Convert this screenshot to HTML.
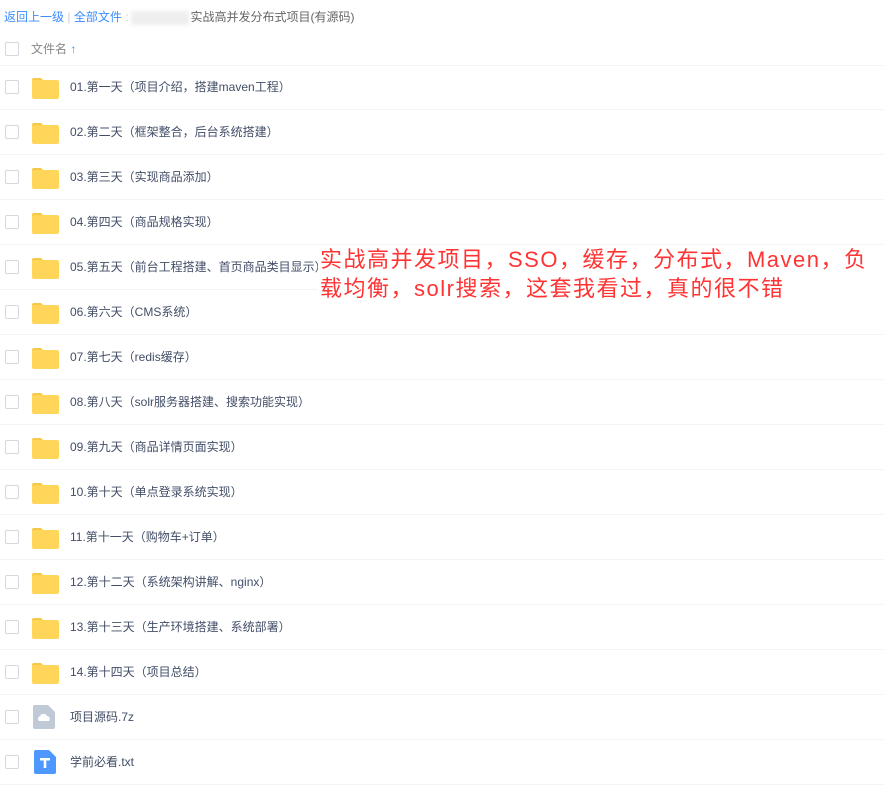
<!DOCTYPE html>
<html><head><meta charset="utf-8"><style>
body{margin:0;width:883px;height:785px;background:#fff;font-family:"Liberation Sans","Noto Sans CJK SC",sans-serif;font-size:12px;color:#424e67;position:relative;overflow:hidden}
.crumb{position:absolute;left:4px;top:8px;color:#666;}
.crumb a{color:#3b8cff}
.blur{display:inline-block;width:58px;height:14px;background:#eee;vertical-align:middle;filter:blur(2px);margin:0 2px}
.hdr{position:absolute;left:0;top:35px;width:883px;height:30px;border-bottom:1px solid #f2f3f5}
.cb{position:absolute;left:5px;width:12px;height:12px;border:1px solid #d4d7de;border-radius:2px;background:#fff}
.row{position:absolute;left:0;width:883px;height:44px;border-bottom:1px solid #f2f3f5}
.row .cb{top:15px}
.row .t{position:absolute;left:70px;top:13px}
.ic{position:absolute;left:32px;top:12px}
.red{position:absolute;left:318px;top:245px;width:565px;background:#fff;color:#f33;font-size:22px;line-height:29px;padding-left:2px;letter-spacing:1.5px}
</style></head><body>
<div class="crumb"><a>返回上一级</a> <span style="color:#ccc">|</span> <a>全部文件</a> <span style="color:#ccc">:</span><span class="blur"></span>实战高并发分布式项目(有源码)</div>
<div class="hdr"><div class="cb" style="top:7px"></div><span style="position:absolute;left:31px;top:5px;color:#888">文件名 <span style="color:#3b8cff;font-weight:bold">↑</span></span></div>
<div class="row" style="top:65px"><div class="cb"></div><svg class="ic" width="27" height="22"><path d="M0 3a2 2 0 0 1 2-2h7l3 3H0z" fill="#f5c945"/><rect x="0" y="3" width="27" height="19" rx="2" fill="#ffd659"/></svg><span class="t">01.第一天（项目介绍，搭建maven工程）</span></div>
<div class="row" style="top:110px"><div class="cb"></div><svg class="ic" width="27" height="22"><path d="M0 3a2 2 0 0 1 2-2h7l3 3H0z" fill="#f5c945"/><rect x="0" y="3" width="27" height="19" rx="2" fill="#ffd659"/></svg><span class="t">02.第二天（框架整合，后台系统搭建）</span></div>
<div class="row" style="top:155px"><div class="cb"></div><svg class="ic" width="27" height="22"><path d="M0 3a2 2 0 0 1 2-2h7l3 3H0z" fill="#f5c945"/><rect x="0" y="3" width="27" height="19" rx="2" fill="#ffd659"/></svg><span class="t">03.第三天（实现商品添加）</span></div>
<div class="row" style="top:200px"><div class="cb"></div><svg class="ic" width="27" height="22"><path d="M0 3a2 2 0 0 1 2-2h7l3 3H0z" fill="#f5c945"/><rect x="0" y="3" width="27" height="19" rx="2" fill="#ffd659"/></svg><span class="t">04.第四天（商品规格实现）</span></div>
<div class="row" style="top:245px"><div class="cb"></div><svg class="ic" width="27" height="22"><path d="M0 3a2 2 0 0 1 2-2h7l3 3H0z" fill="#f5c945"/><rect x="0" y="3" width="27" height="19" rx="2" fill="#ffd659"/></svg><span class="t">05.第五天（前台工程搭建、首页商品类目显示）</span></div>
<div class="row" style="top:290px"><div class="cb"></div><svg class="ic" width="27" height="22"><path d="M0 3a2 2 0 0 1 2-2h7l3 3H0z" fill="#f5c945"/><rect x="0" y="3" width="27" height="19" rx="2" fill="#ffd659"/></svg><span class="t">06.第六天（CMS系统）</span></div>
<div class="row" style="top:335px"><div class="cb"></div><svg class="ic" width="27" height="22"><path d="M0 3a2 2 0 0 1 2-2h7l3 3H0z" fill="#f5c945"/><rect x="0" y="3" width="27" height="19" rx="2" fill="#ffd659"/></svg><span class="t">07.第七天（redis缓存）</span></div>
<div class="row" style="top:380px"><div class="cb"></div><svg class="ic" width="27" height="22"><path d="M0 3a2 2 0 0 1 2-2h7l3 3H0z" fill="#f5c945"/><rect x="0" y="3" width="27" height="19" rx="2" fill="#ffd659"/></svg><span class="t">08.第八天（solr服务器搭建、搜索功能实现）</span></div>
<div class="row" style="top:425px"><div class="cb"></div><svg class="ic" width="27" height="22"><path d="M0 3a2 2 0 0 1 2-2h7l3 3H0z" fill="#f5c945"/><rect x="0" y="3" width="27" height="19" rx="2" fill="#ffd659"/></svg><span class="t">09.第九天（商品详情页面实现）</span></div>
<div class="row" style="top:470px"><div class="cb"></div><svg class="ic" width="27" height="22"><path d="M0 3a2 2 0 0 1 2-2h7l3 3H0z" fill="#f5c945"/><rect x="0" y="3" width="27" height="19" rx="2" fill="#ffd659"/></svg><span class="t">10.第十天（单点登录系统实现）</span></div>
<div class="row" style="top:515px"><div class="cb"></div><svg class="ic" width="27" height="22"><path d="M0 3a2 2 0 0 1 2-2h7l3 3H0z" fill="#f5c945"/><rect x="0" y="3" width="27" height="19" rx="2" fill="#ffd659"/></svg><span class="t">11.第十一天（购物车+订单）</span></div>
<div class="row" style="top:560px"><div class="cb"></div><svg class="ic" width="27" height="22"><path d="M0 3a2 2 0 0 1 2-2h7l3 3H0z" fill="#f5c945"/><rect x="0" y="3" width="27" height="19" rx="2" fill="#ffd659"/></svg><span class="t">12.第十二天（系统架构讲解、nginx）</span></div>
<div class="row" style="top:605px"><div class="cb"></div><svg class="ic" width="27" height="22"><path d="M0 3a2 2 0 0 1 2-2h7l3 3H0z" fill="#f5c945"/><rect x="0" y="3" width="27" height="19" rx="2" fill="#ffd659"/></svg><span class="t">13.第十三天（生产环境搭建、系统部署）</span></div>
<div class="row" style="top:650px"><div class="cb"></div><svg class="ic" width="27" height="22"><path d="M0 3a2 2 0 0 1 2-2h7l3 3H0z" fill="#f5c945"/><rect x="0" y="3" width="27" height="19" rx="2" fill="#ffd659"/></svg><span class="t">14.第十四天（项目总结）</span></div>
<div class="row" style="top:695px"><div class="cb"></div><svg class="ic" width="22" height="24" style="left:33px;top:10px"><path d="M2 0h13l7 7v15a2 2 0 0 1-2 2H2a2 2 0 0 1-2-2V2a2 2 0 0 1 2-2z" fill="#bfcad6"/><path d="M6 16a3 3 0 0 1 1-5 4 4 0 0 1 7 0 3 3 0 0 1 2 5z" fill="#fff"/></svg><span class="t">项目源码.7z</span></div>
<div class="row" style="top:740px"><div class="cb"></div><svg class="ic" width="22" height="24" style="left:34px;top:10px"><path d="M2 0h13l7 7v15a2 2 0 0 1-2 2H2a2 2 0 0 1-2-2V2a2 2 0 0 1 2-2z" fill="#4d97ff"/><path d="M6 8h10v2.5h-3.7V18H9.7v-7.5H6z" fill="#fff"/></svg><span class="t">学前必看.txt</span></div>
<div class="red">实战高并发项目，SSO，缓存，分布式，Maven，负<br>载均衡，solr搜索，这套我看过，真的很不错</div>
</body></html>
